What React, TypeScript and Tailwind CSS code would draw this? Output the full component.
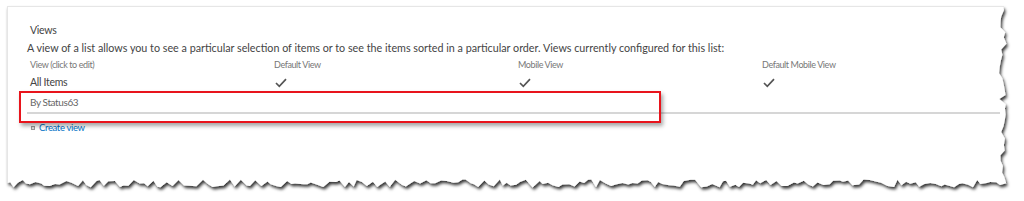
import React from 'react'

// deterministic jitter so the torn edge is the same every render
const makeRand = (seed: number) => {
  let s = seed
  return () => {
    s = (s * 9301 + 49297) % 233280
    return s / 233280
  }
}

const buildPaperPath = () => {
  const rand = makeRand(11)
  const pts: string[] = ['M7,6', 'L1003,6']
  for (let y = 10; y < 184; y += 4 + rand() * 3) {
    const x = 1002 + (rand() - 0.4) * 8
    pts.push(`L${x.toFixed(1)},${y.toFixed(1)}`)
  }
  for (let x = 1000; x > 8; x -= 3 + rand() * 4) {
    const y = 183 + (rand() - 0.45) * 8
    pts.push(`L${x.toFixed(1)},${y.toFixed(1)}`)
  }
  pts.push('L7,183', 'Z')
  return pts.join(' ')
}

const paperPath = buildPaperPath()

const Paper: React.FC = () => (
  <svg className="absolute inset-0" width={1024} height={201} viewBox="0 0 1024 201">
    <defs>
      <filter id="tear" x="-5%" y="-20%" width="110%" height="140%">
        <feDropShadow dx="1.5" dy="2.5" stdDeviation="1.6" floodColor="#000" floodOpacity="0.8" />
      </filter>
    </defs>
    <path d={paperPath} fill="#fff" filter="url(#tear)" />
    <line x1="7" y1="6.5" x2="1004" y2="6.5" stroke="#e6e6e6" strokeWidth="1" />
    <line x1="7.5" y1="6" x2="7.5" y2="183" stroke="#e6e6e6" strokeWidth="1" />
  </svg>
)

const Check: React.FC = () => (
  <svg width="12" height="10" viewBox="0 0 12 10" className="block">
    <polyline points="1,5 4.3,8.3 11,1.2" fill="none" stroke="#555" strokeWidth="1.7" />
  </svg>
)

const columns = ['View (click to edit)', 'Default View', 'Mobile View', 'Default Mobile View']

const App: React.FC = () => {
  return (
    <div
      className="relative w-[1024px] h-[201px] bg-white overflow-hidden"
      style={{ fontFamily: 'Lato, "Open Sans", sans-serif' }}
    >
      <Paper />

      <div className="relative pt-[21px]">
        <div className="pl-[30px] h-[18px] leading-[18px] text-[10.5px] tracking-[-0.3px] text-[#444]">Views</div>
        <div className="pl-[27px] h-[17px] leading-[17px] text-[10.75px] text-[#444] whitespace-nowrap">
          A view of a list allows you to see a particular selection of items or to see the items sorted in a particular order. Views currently configured for this list:
        </div>

        <div className="pl-[30px] grid grid-cols-[244px_244px_244px_244px] h-[17px] items-center text-[9px] tracking-[-0.4px] text-[#777]">
          {columns.map((c) => (
            <div key={c}>{c}</div>
          ))}
        </div>

        <div className="pl-[30px] grid grid-cols-[244px_244px_244px_244px] h-[20px] items-center text-[10.5px] tracking-[-0.3px] text-[#444]">
          <div>All Items</div>
          <div className="pl-[1px]"><Check /></div>
          <div className="pl-[1px]"><Check /></div>
          <div className="pl-[1px]"><Check /></div>
        </div>

        <div className="pl-[30px] h-[18px] leading-[18px] text-[10px] tracking-[-0.4px] text-[#666]">By Status63</div>
        <div className="ml-[27px] w-[973px] h-[2px] bg-[#d6d6d6] mt-[1px]" />

        <div className="pl-[31px] mt-[5px] h-[18px] flex items-center gap-[4px] text-[9.5px] tracking-[-0.35px] text-[#0072c6]">
          <span className="w-[4px] h-[4px] border border-[#999] bg-[#ddd]" />
          <span>Create view</span>
        </div>
      </div>

      {/* red annotation box */}
      <div className="absolute left-[19px] top-[91px] w-[642px] h-[32px] border-2 border-[#e8141c] shadow-[2px_3px_4px_rgba(0,0,0,0.35)]" />
    </div>
  )
}

export default App
